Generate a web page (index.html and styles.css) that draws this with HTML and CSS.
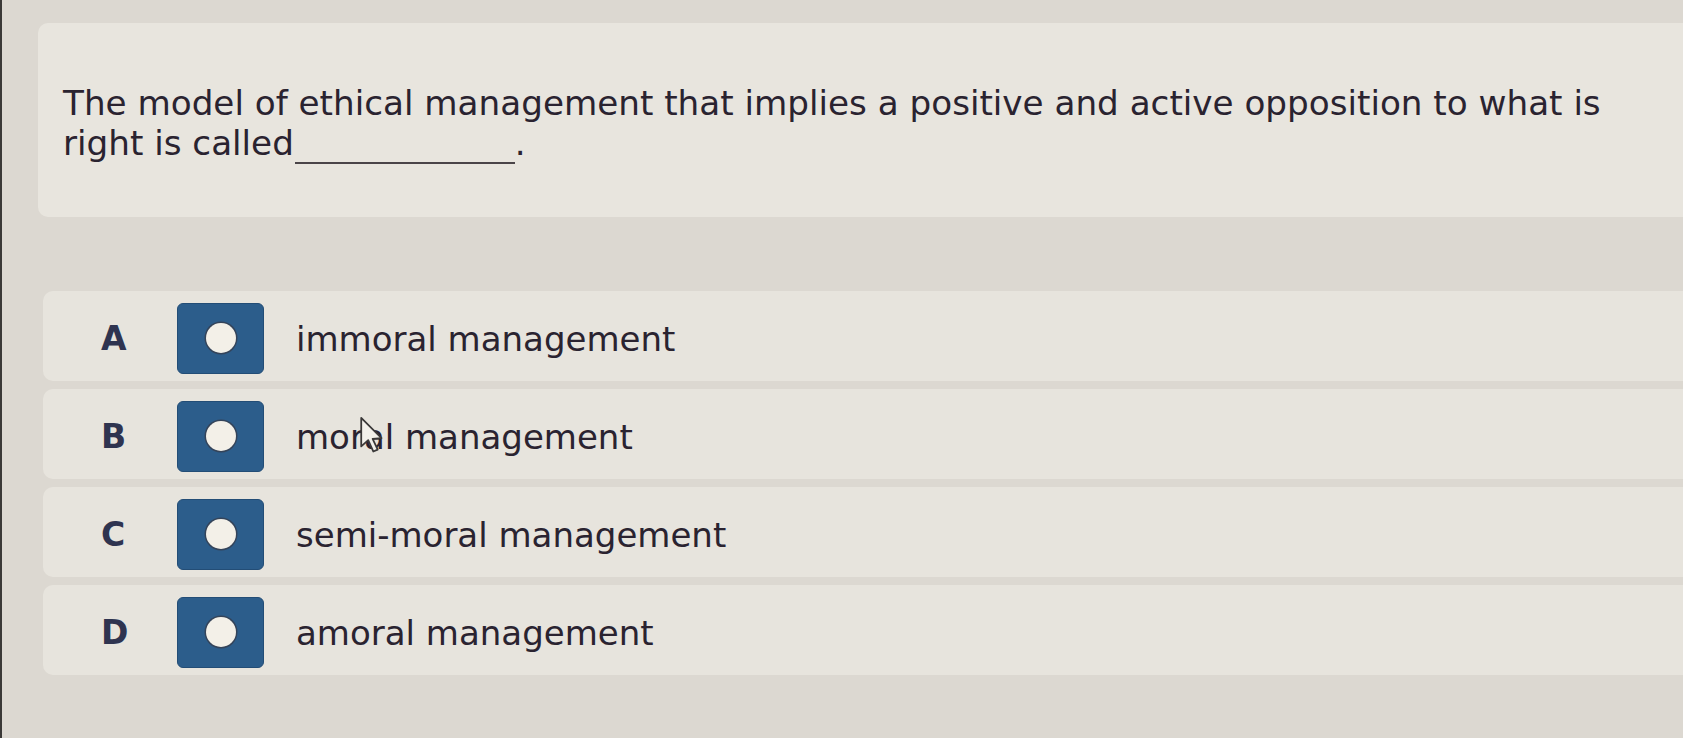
FILE: index.html
```html
<!DOCTYPE html>
<html>
  <head>
    <title>Question</title>
    <link rel="stylesheet" href="styles.css">
  </head>
  <body>
    <div class="page">
      <div class="question">
        <p>The model of ethical management that implies a positive and active opposition to what is right is called<span class="blank"></span>.</p>
      </div>
      <div class="answers">
        <div class="answer">
          <span class="letter">A</span>
          <span class="radio"><span class="dot"></span></span>
          <span class="choice">immoral management</span>
        </div>
        <div class="answer">
          <span class="letter">B</span>
          <span class="radio"><span class="dot"></span></span>
          <span class="choice">moral management</span>
        </div>
        <div class="answer">
          <span class="letter">C</span>
          <span class="radio"><span class="dot"></span></span>
          <span class="choice">semi-moral management</span>
        </div>
        <div class="answer">
          <span class="letter">D</span>
          <span class="radio"><span class="dot"></span></span>
          <span class="choice">amoral management</span>
        </div>
      </div>
    </div>
    <svg class="cursor" width="26" height="38" viewBox="0 0 20 30">
      <path d="M1.5 1.5 L1.5 24 L7 19 L11 28 L14.5 26.5 L10.5 18 L17.5 17.5 Z" fill="#f2f0ea" stroke="#3a3838" stroke-width="1.4" stroke-linejoin="round"/>
    </svg>
  </body>
</html>
```

FILE: styles.css
```css
body {
  margin: 0;
  background: #dcd8d1;
  border-left: 2px solid #3b3937;
  font-family: "DejaVu Sans", sans-serif;
  color: #2a2330;
  height: 738px;
  box-sizing: border-box;
  overflow: hidden;
}
.page {
  padding: 23px 0 0 36px;
}
.question {
  background: #e8e5de;
  border-radius: 10px 0 0 10px;
  height: 194px;
  box-sizing: border-box;
  padding: 60px 0 0 25px;
}
.question p {
  margin: 0;
  max-width: 1570px;
  font-size: 34.2px;
  line-height: 40px;
}
.blank {
  display: inline-block;
  width: 220px;
  border-bottom: 2px solid #4a4448;
  vertical-align: -9px;
  margin-left: 1px;
}
.answers {
  margin-top: 74px;
  margin-left: 5px;
  display: flex;
  flex-direction: column;
  gap: 8px;
}
.answer {
  background: #e7e4dd;
  border-radius: 10px 0 0 10px;
  height: 90px;
  display: flex;
  align-items: center;
}
.letter {
  width: 76px;
  padding-left: 58px;
  margin-top: 4px;
  font-weight: bold;
  font-size: 33px;
  color: #2f3450;
}
.radio {
  width: 87px;
  height: 71px;
  margin-top: 4px;
  background: #2c5d8b;
  border: 1px solid #234d76;
  box-sizing: border-box;
  border-radius: 6px;
  display: flex;
  align-items: center;
  justify-content: center;
}
.dot {
  width: 30px;
  height: 30px;
  border-radius: 50%;
  background: #f3f0e8;
  box-shadow: 0 0 0 1.5px #34445a;
}
.choice {
  margin-left: 32px;
  margin-top: 6px;
  font-size: 34px;
}
.cursor {
  position: absolute;
  left: 359px;
  top: 416px;
}
```
